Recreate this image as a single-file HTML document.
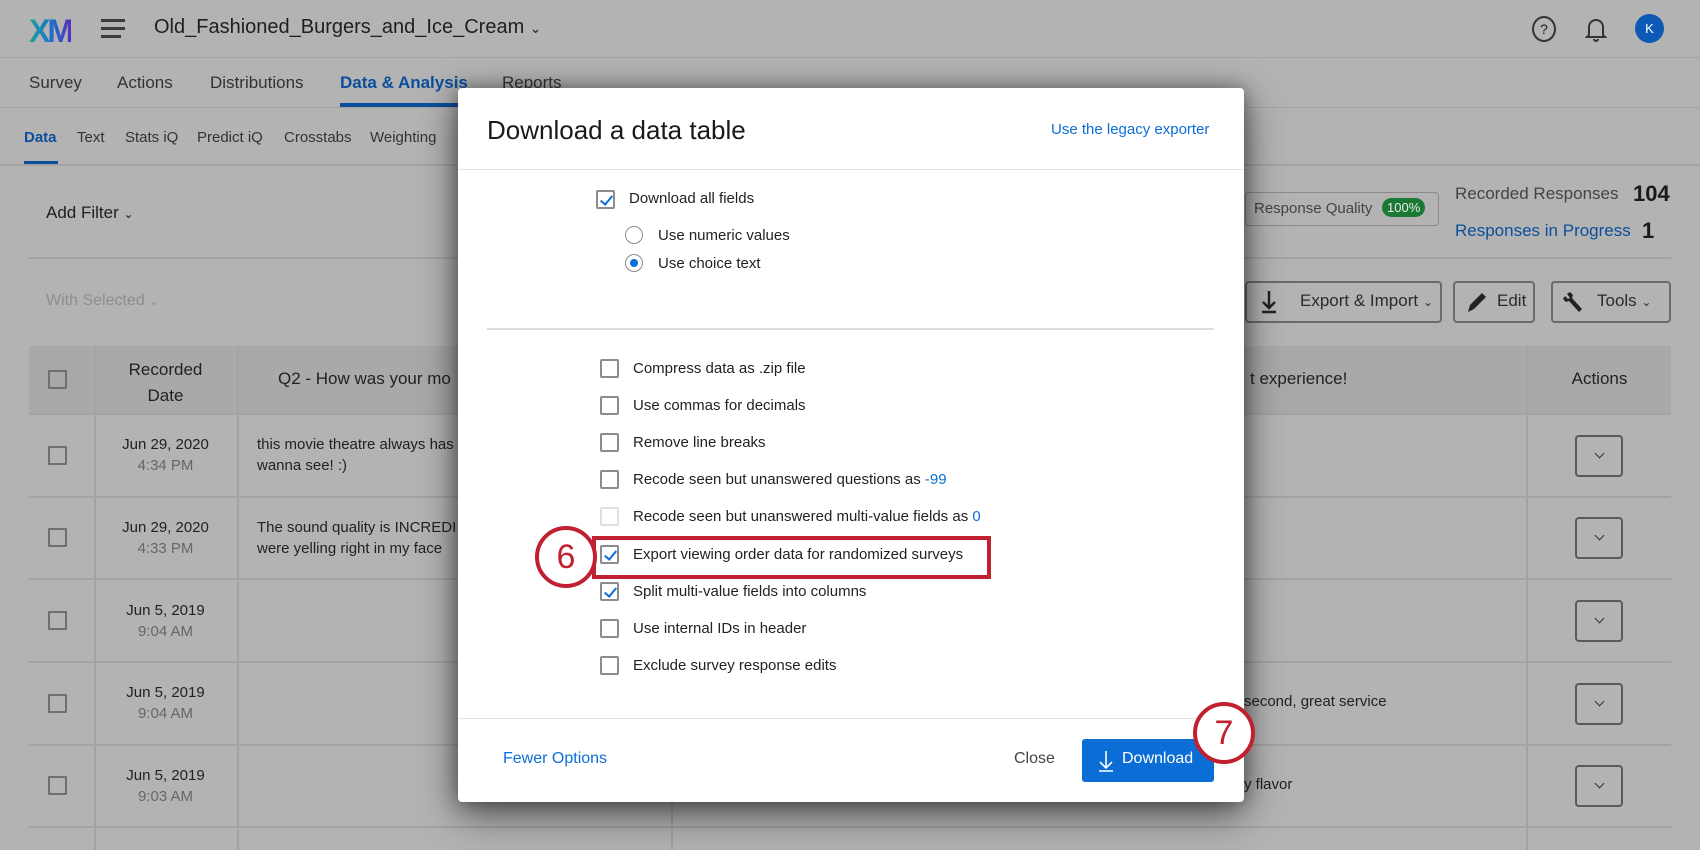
<!DOCTYPE html>
<html><head><meta charset="utf-8">
<style>
*{box-sizing:border-box;margin:0;padding:0}
body{width:1700px;height:850px;overflow:hidden;background:#b3b3b3;font-family:"Liberation Sans",sans-serif;color:#1f1f1f;position:relative}
.a{position:absolute;white-space:nowrap}
.hl{position:absolute;height:2px;background:#a3a3a3}
.vl{position:absolute;width:2px;background:#a3a3a3}
.cb{position:absolute;width:19px;height:19px;border:2px solid #8c8c8c;border-radius:2px;background:#fff}
.tcb{position:absolute;width:19px;height:19px;border:2px solid #6f6f6f;border-radius:1px}
.btn{position:absolute;border:2px solid #6b6b6b;border-radius:4px;font-size:17px;color:#2b2b2b}
.act{position:absolute;left:1575px;width:48px;height:42px;border:2px solid #5a5a5a;border-radius:4px}
.act:after{content:"";position:absolute;left:19px;top:13px;width:6px;height:6px;border-right:1.5px solid #333;border-bottom:1.5px solid #333;transform:rotate(45deg)}
.chk:after{content:"";position:absolute;left:5px;top:1px;width:5px;height:10px;border-right:2.5px solid #0b6ed6;border-bottom:2.5px solid #0b6ed6;transform:rotate(40deg)}
.m{font-size:15px;color:#222}
</style></head><body>
<!-- top bar -->
<div class="a" style="left:29px;top:13px;font-size:32px;font-weight:bold;letter-spacing:-3px;color:#1a6fb8;background:linear-gradient(90deg,#1aa39a,#1d74c6,#5a2fbf);-webkit-background-clip:text;color:transparent">XM</div>
<div class="a" style="left:101px;top:19px;width:24px;height:3px;background:#3a3a3a"></div>
<div class="a" style="left:101px;top:27px;width:24px;height:3px;background:#3a3a3a"></div>
<div class="a" style="left:101px;top:35px;width:20px;height:3px;background:#3a3a3a"></div>
<div class="a" style="left:154px;top:16px;font-size:20px;color:#1f1f1f">Old_Fashioned_Burgers_and_Ice_Cream <span style="font-size:14px">&#8964;</span></div>
<div class="a" style="left:1532px;top:16px;width:24px;height:26px;border:2px solid #333;border-radius:50%;font-size:14px;text-align:center;line-height:22px">?</div>
<svg class="a" style="left:1584px;top:15px" width="24" height="28" viewBox="0 0 24 28"><path d="M5 20V12a7 7 0 0 1 14 0v8l2 2H3z" fill="none" stroke="#333" stroke-width="2"/><path d="M10 24a2 2 0 0 0 4 0" fill="none" stroke="#333" stroke-width="2"/></svg>
<div class="a" style="left:1635px;top:14px;width:29px;height:29px;border-radius:50%;background:#0c5ab5;color:#fff;font-size:13px;text-align:center;line-height:29px">K</div>
<div class="hl" style="left:0;top:57px;width:1700px;height:1px"></div>
<!-- nav -->
<div class="a" style="left:29px;top:73px;font-size:17px;color:#333">Survey</div>
<div class="a" style="left:117px;top:73px;font-size:17px;color:#333">Actions</div>
<div class="a" style="left:210px;top:73px;font-size:17px;color:#333">Distributions</div>
<div class="a" style="left:340px;top:73px;font-size:17px;color:#0b4f9c;font-weight:bold">Data &amp; Analysis</div>
<div class="a" style="left:502px;top:73px;font-size:17px;color:#333">Reports</div>
<div class="a" style="left:340px;top:103px;width:123px;height:4px;background:#0b4f9c"></div>
<div class="hl" style="left:0;top:107px;width:1700px;height:1px"></div>
<div class="a" style="left:24px;top:129px;font-size:15px;color:#0b4f9c;font-weight:bold">Data</div>
<div class="a" style="left:77px;top:129px;font-size:15px;color:#333">Text</div>
<div class="a" style="left:125px;top:129px;font-size:15px;color:#333">Stats iQ</div>
<div class="a" style="left:197px;top:129px;font-size:15px;color:#333">Predict iQ</div>
<div class="a" style="left:284px;top:129px;font-size:15px;color:#333">Crosstabs</div>
<div class="a" style="left:370px;top:129px;font-size:15px;color:#333">Weighting</div>
<div class="a" style="left:24px;top:161px;width:34px;height:4px;background:#0b4f9c"></div>
<div class="hl" style="left:0;top:164px;width:1700px"></div>
<div class="a" style="left:46px;top:203px;font-size:17px;color:#1f1f1f">Add Filter <span style="font-size:12px">&#8964;</span></div>
<div class="hl" style="left:29px;top:257px;width:1642px"></div>
<div class="a" style="left:46px;top:292px;font-size:16px;color:#8e8e8e">With Selected <span style="font-size:12px">&#8964;</span></div>
<!-- right stats -->
<div class="a" style="left:1245px;top:192px;width:194px;height:34px;border:1.5px solid #8a8a8a;border-radius:4px"></div>
<div class="a" style="left:1254px;top:200px;font-size:15px;color:#444">Response Quality</div>
<div class="a" style="left:1382px;top:198px;font-size:13px;color:#e8e8e8;background:#1a7a35;border-radius:10px;padding:2px 5px">100%</div>
<div class="a" style="left:1455px;top:184px;font-size:17px;color:#444">Recorded Responses</div>
<div class="a" style="left:1633px;top:181px;font-size:22px;font-weight:bold;color:#1a1a1a">104</div>
<div class="a" style="left:1455px;top:221px;font-size:17px;color:#0b4f9c">Responses in Progress</div>
<div class="a" style="left:1642px;top:218px;font-size:22px;font-weight:bold;color:#1a1a1a">1</div>
<div class="hl" style="left:1245px;top:257px;width:426px"></div>
<div class="btn" style="left:1245px;top:281px;width:197px;height:42px"></div>
<div class="a" style="left:1300px;top:291px;font-size:17px;color:#2b2b2b">Export &amp; Import <span style="font-size:12px">&#8964;</span></div>
<svg class="a" style="left:1260px;top:290px" width="18" height="24"><path d="M9 1v17M3 12l6 6 6-6M2 22h14" stroke="#222" stroke-width="2.5" fill="none"/></svg>
<div class="btn" style="left:1453px;top:281px;width:82px;height:42px"></div>
<svg class="a" style="left:1465px;top:290px" width="22" height="24"><path d="M3 22l2-7 12-12 4 4-12 12z" fill="#222"/></svg>
<div class="a" style="left:1497px;top:291px;font-size:17px;color:#2b2b2b">Edit</div>
<div class="btn" style="left:1551px;top:281px;width:120px;height:42px"></div>
<svg class="a" style="left:1563px;top:290px" width="22" height="24"><path d="M4 4l3-2 3 3-1 3 10 11-3 3-10-11-3 1-3-3 2-3 3 3 2-1z" fill="#222"/></svg>
<div class="a" style="left:1597px;top:291px;font-size:17px;color:#2b2b2b">Tools <span style="font-size:12px">&#8964;</span></div>
<!-- table -->
<div class="a" style="left:29px;top:346px;width:1642px;height:68px;background:#a8a9ab"></div>
<div class="vl" style="left:94px;top:346px;height:504px"></div>
<div class="vl" style="left:237px;top:346px;height:504px"></div>
<div class="vl" style="left:671px;top:346px;height:504px"></div>
<div class="vl" style="left:1526px;top:346px;height:504px"></div>
<div class="hl" style="left:29px;top:413px;width:1642px"></div>
<div class="hl" style="left:29px;top:496px;width:1642px"></div>
<div class="hl" style="left:29px;top:578px;width:1642px"></div>
<div class="hl" style="left:29px;top:661px;width:1642px"></div>
<div class="hl" style="left:29px;top:744px;width:1642px"></div>
<div class="hl" style="left:29px;top:826px;width:1642px"></div>
<div class="tcb" style="left:48px;top:370px"></div>
<div class="a" style="left:94px;top:357px;width:143px;text-align:center;font-size:17px;line-height:26px;color:#222">Recorded<br>Date</div>
<div class="a" style="left:278px;top:369px;font-size:17px;color:#222">Q2 - How was your mo</div>
<div class="a" style="left:1250px;top:369px;font-size:17px;color:#222">t experience!</div>
<div class="a" style="left:1528px;top:369px;width:143px;text-align:center;font-size:17px;color:#222">Actions</div>
<!-- rows -->
<div class="tcb" style="left:48px;top:446px"></div>
<div class="tcb" style="left:48px;top:528px"></div>
<div class="tcb" style="left:48px;top:611px"></div>
<div class="tcb" style="left:48px;top:694px"></div>
<div class="tcb" style="left:48px;top:776px"></div>
<div class="a" style="left:94px;top:434px;width:143px;text-align:center;font-size:15px;line-height:21px;color:#222">Jun 29, 2020<br><span style="color:#666">4:34 PM</span></div>
<div class="a" style="left:94px;top:517px;width:143px;text-align:center;font-size:15px;line-height:21px;color:#222">Jun 29, 2020<br><span style="color:#666">4:33 PM</span></div>
<div class="a" style="left:94px;top:600px;width:143px;text-align:center;font-size:15px;line-height:21px;color:#222">Jun 5, 2019<br><span style="color:#666">9:04 AM</span></div>
<div class="a" style="left:94px;top:682px;width:143px;text-align:center;font-size:15px;line-height:21px;color:#222">Jun 5, 2019<br><span style="color:#666">9:04 AM</span></div>
<div class="a" style="left:94px;top:765px;width:143px;text-align:center;font-size:15px;line-height:21px;color:#222">Jun 5, 2019<br><span style="color:#666">9:03 AM</span></div>
<div class="a" style="left:257px;top:434px;font-size:15px;line-height:21px;color:#222">this movie theatre always has<br>wanna see! :)</div>
<div class="a" style="left:257px;top:517px;font-size:15px;line-height:21px;color:#222">The sound quality is INCREDI<br>were yelling right in my face</div>
<div class="a" style="left:1244px;top:693px;font-size:15px;color:#222">second, great service</div>
<div class="a" style="left:1244px;top:776px;font-size:15px;color:#222">y flavor</div>
<div class="act" style="top:435px"></div>
<div class="act" style="top:517px"></div>
<div class="act" style="top:600px"></div>
<div class="act" style="top:683px"></div>
<div class="act" style="top:765px"></div>
<!-- modal -->
<div class="a" style="left:458px;top:88px;width:786px;height:714px;background:#fff;border-radius:4px;box-shadow:0 12px 40px rgba(0,0,0,.55),0 0 18px rgba(0,0,0,.35)"></div>
<div class="a" style="left:487px;top:115px;font-size:26px;color:#1a1a1a">Download a data table</div>
<div class="a" style="left:1051px;top:121px;font-size:15px;color:#0b6ed6">Use the legacy exporter</div>
<div class="a" style="left:459px;top:169px;width:784px;height:1px;background:#e3e3e3"></div>
<div class="cb chk" style="left:596px;top:190px"></div>
<div class="a m" style="left:629px;top:190px">Download all fields</div>
<div class="a" style="left:625px;top:226px;width:18px;height:18px;border:1.5px solid #8c8c8c;border-radius:50%"></div>
<div class="a m" style="left:658px;top:227px">Use numeric values</div>
<div class="a" style="left:625px;top:254px;width:18px;height:18px;border:1.5px solid #8c8c8c;border-radius:50%"></div>
<div class="a" style="left:630px;top:259px;width:8px;height:8px;background:#0b6ed6;border-radius:50%"></div>
<div class="a m" style="left:658px;top:255px">Use choice text</div>
<div class="a" style="left:487px;top:328px;width:727px;height:2px;background:#dcdcdc"></div>
<div class="cb" style="left:600px;top:359px"></div><div class="a m" style="left:633px;top:360px">Compress data as .zip file</div>
<div class="cb" style="left:600px;top:396px"></div><div class="a m" style="left:633px;top:397px">Use commas for decimals</div>
<div class="cb" style="left:600px;top:433px"></div><div class="a m" style="left:633px;top:434px">Remove line breaks</div>
<div class="cb" style="left:600px;top:470px"></div><div class="a m" style="left:633px;top:471px">Recode seen but unanswered questions as <span style="color:#0b6ed6">-99</span></div>
<div class="cb" style="left:600px;top:507px;border-color:#e0e0e0"></div><div class="a m" style="left:633px;top:508px">Recode seen but unanswered multi-value fields as <span style="color:#0b6ed6">0</span></div>
<div class="cb chk" style="left:600px;top:545px"></div><div class="a m" style="left:633px;top:546px">Export viewing order data for randomized surveys</div>
<div class="cb chk" style="left:600px;top:582px"></div><div class="a m" style="left:633px;top:583px">Split multi-value fields into columns</div>
<div class="cb" style="left:600px;top:619px"></div><div class="a m" style="left:633px;top:620px">Use internal IDs in header</div>
<div class="cb" style="left:600px;top:656px"></div><div class="a m" style="left:633px;top:657px">Exclude survey response edits</div>
<!-- annotation 6 -->
<div class="a" style="left:592px;top:536px;width:399px;height:43px;border:4px solid #c0202f"></div>
<div class="a" style="left:535px;top:526px;width:62px;height:62px;border:4px solid #c0202f;border-radius:50%;background:#fff;font-size:34px;text-align:center;line-height:54px;color:#c0202f">6</div>
<!-- footer -->
<div class="a" style="left:459px;top:718px;width:784px;height:1px;background:#e3e3e3"></div>
<div class="a" style="left:503px;top:750px;font-size:16px;color:#0b6ed6">Fewer Options</div>
<div class="a" style="left:1014px;top:750px;font-size:16px;color:#444">Close</div>
<div class="a" style="left:1082px;top:739px;width:132px;height:43px;background:#0b6ed6;border-radius:3px"></div>
<svg class="a" style="left:1097px;top:749px" width="18" height="24"><path d="M9 2v17M3 13l6 6 6-6M2 22h14" stroke="#fff" stroke-width="1.6" fill="none"/></svg>
<div class="a" style="left:1122px;top:750px;font-size:16px;color:#fff">Download</div>
<div class="a" style="left:1193px;top:702px;width:62px;height:62px;border:4px solid #c0202f;border-radius:50%;background:#fff;font-size:34px;text-align:center;line-height:54px;color:#c0202f">7</div>
</body></html>
